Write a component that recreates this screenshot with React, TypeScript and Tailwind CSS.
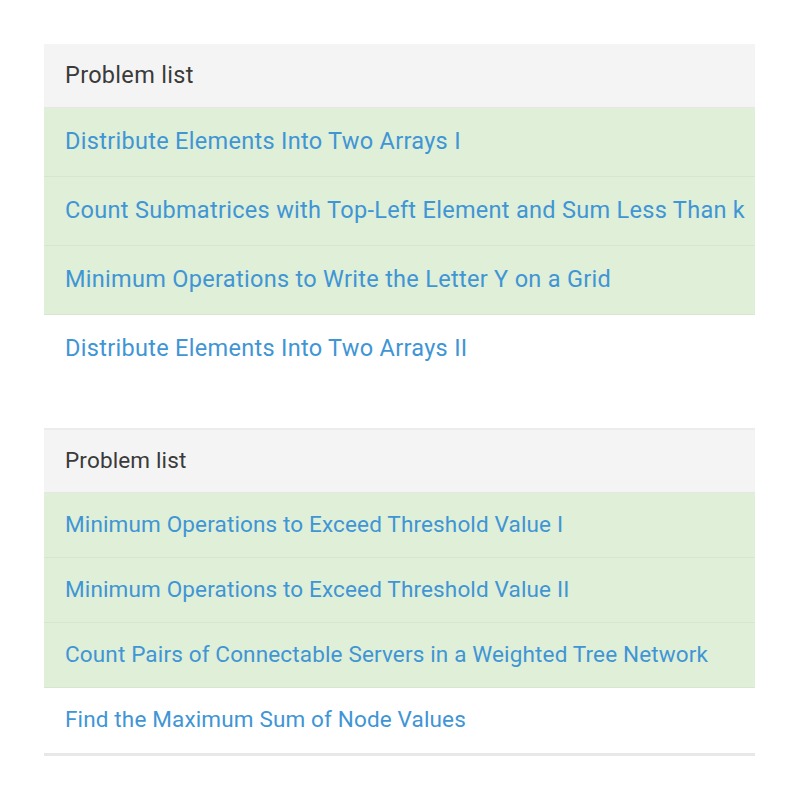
const first = [
  { title: "Distribute Elements Into Two Arrays I", done: true },
  { title: "Count Submatrices with Top-Left Element and Sum Less Than k", done: true },
  { title: "Minimum Operations to Write the Letter Y on a Grid", done: true },
  { title: "Distribute Elements Into Two Arrays II", done: false },
];

const second = [
  { title: "Minimum Operations to Exceed Threshold Value I", done: true },
  { title: "Minimum Operations to Exceed Threshold Value II", done: true },
  { title: "Count Pairs of Connectable Servers in a Weighted Tree Network", done: true },
  { title: "Find the Maximum Sum of Node Values", done: false },
];

export default function App() {
  return (
    <div
      className="min-h-[800px] w-[800px] bg-white pt-[44px] pl-[44px]"
      style={{ fontFamily: "Roboto, 'Liberation Sans', sans-serif" }}
    >
      {/* First contest */}
      <div className="w-[711px]">
        <div className="h-[64px] flex items-center px-[21px] bg-[#f4f4f4] border-b border-[#e6e6e6] text-[23.5px] tracking-[0.3px] text-[#3a3a3a]">
          Problem list
        </div>
        {first.map((p) => (
          <div
            key={p.title}
            className={`h-[69px] flex items-center pl-[21px] pr-2 border-b whitespace-nowrap text-[23.5px] tracking-[0.3px] text-[#4095d5] ${
              p.done ? "bg-[#dfefd8] border-[#d6e6cf]" : "bg-white border-transparent"
            }`}
          >
            {p.title}
          </div>
        ))}
      </div>

      {/* Second contest */}
      <div className="w-[711px] mt-[44px] border-t-2 border-[#ececec] border-b-[3px] border-b-[#e8e8e8]">
        <div className="h-[63px] flex items-center px-[21px] bg-[#f4f4f4] border-b border-[#e6e6e6] text-[22.5px] tracking-[0.15px] text-[#3a3a3a]">
          Problem list
        </div>
        {second.map((p) => (
          <div
            key={p.title}
            className={`h-[65px] flex items-center pl-[21px] pr-2 border-b whitespace-nowrap text-[22.5px] tracking-[0.15px] text-[#4095d5] ${
              p.done ? "bg-[#dfefd8] border-[#d6e6cf]" : "bg-white border-transparent"
            }`}
          >
            {p.title}
          </div>
        ))}
      </div>
    </div>
  );
}
